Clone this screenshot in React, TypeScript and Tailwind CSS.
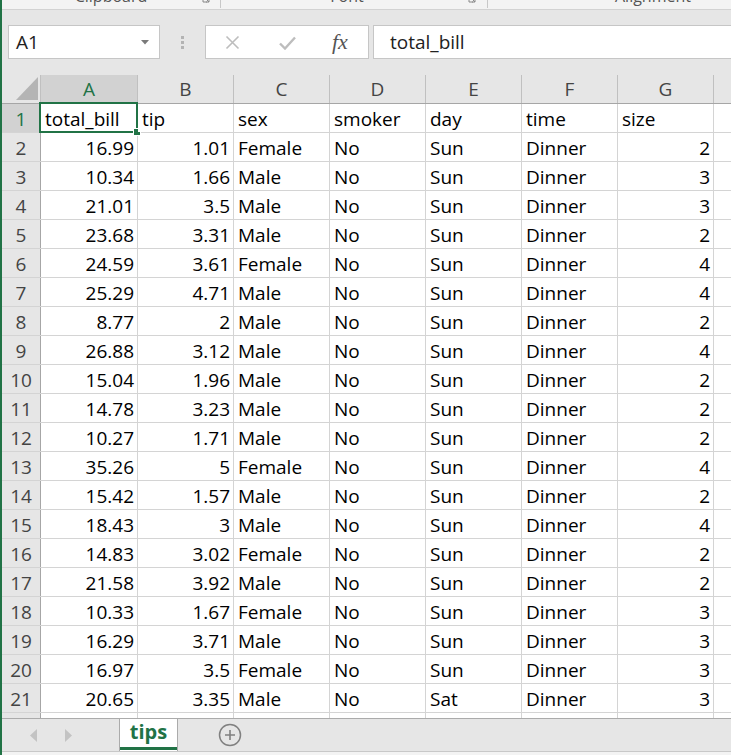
import React from "react";

const rows: (string | number)[][] = [
  [16.99, 1.01, "Female", "No", "Sun", "Dinner", 2],
  [10.34, 1.66, "Male", "No", "Sun", "Dinner", 3],
  [21.01, 3.5, "Male", "No", "Sun", "Dinner", 3],
  [23.68, 3.31, "Male", "No", "Sun", "Dinner", 2],
  [24.59, 3.61, "Female", "No", "Sun", "Dinner", 4],
  [25.29, 4.71, "Male", "No", "Sun", "Dinner", 4],
  [8.77, 2, "Male", "No", "Sun", "Dinner", 2],
  [26.88, 3.12, "Male", "No", "Sun", "Dinner", 4],
  [15.04, 1.96, "Male", "No", "Sun", "Dinner", 2],
  [14.78, 3.23, "Male", "No", "Sun", "Dinner", 2],
  [10.27, 1.71, "Male", "No", "Sun", "Dinner", 2],
  [35.26, 5, "Female", "No", "Sun", "Dinner", 4],
  [15.42, 1.57, "Male", "No", "Sun", "Dinner", 2],
  [18.43, 3, "Male", "No", "Sun", "Dinner", 4],
  [14.83, 3.02, "Female", "No", "Sun", "Dinner", 2],
  [21.58, 3.92, "Male", "No", "Sun", "Dinner", 2],
  [10.33, 1.67, "Female", "No", "Sun", "Dinner", 3],
  [16.29, 3.71, "Male", "No", "Sun", "Dinner", 3],
  [16.97, 3.5, "Female", "No", "Sun", "Dinner", 3],
  [20.65, 3.35, "Male", "No", "Sat", "Dinner", 3],
];

const headers = ["total_bill", "tip", "sex", "smoker", "day", "time", "size"];
const cols = ["A", "B", "C", "D", "E", "F", "G"];
const colW = ["w-[97px]", "w-[96px]", "w-[96px]", "w-[96px]", "w-[96px]", "w-[96px]", "w-[96px]"];

function Cell({ v, i }: { v: string | number; i: number }) {
  const num = typeof v === "number";
  return (
    <div
      className={`${colW[i]} shrink-0 h-full border-r border-[#d4d4d4] bg-white whitespace-nowrap overflow-hidden pt-[1px] ${
        num ? "text-right pr-[3px]" : "text-left pl-[4px]"
      }`}
    >
      {v}
    </div>
  );
}

function Launcher({ left }: { left: string }) {
  return (
    <div className={`absolute ${left} top-[-2px]`}>
      <svg width="10" height="6" viewBox="0 0 10 6">
        <path d="M1 0 V4 H5" stroke="#888" strokeWidth="1" fill="none" />
        <path d="M3 0 L7 4 M7 1 V4 H4" stroke="#888" strokeWidth="1" fill="none" />
      </svg>
    </div>
  );
}

export default function App() {
  return (
    <div className="w-[731px] h-[755px] overflow-hidden flex flex-col border-l-2 border-[#217346] bg-[#e6e6e6] text-[19px] text-black font-['Open_Sans',sans-serif]">
      {/* ribbon remnant */}
      <div className="h-[10px] shrink-0 bg-[#f3f3f3] border-b border-[#d2d2d2] relative overflow-hidden text-[#555] text-[16px]">
        <div className="absolute left-0 top-[-14px] w-[218px] text-center leading-[20px]">Clipboard</div>
        <Launcher left="left-[200px]" />
        <div className="absolute left-[218px] top-0 h-[8px] border-l border-[#c8c8c8]" />
        <div className="absolute left-[220px] top-[-14px] w-[250px] text-center leading-[20px]">Font</div>
        <Launcher left="left-[466px]" />
        <div className="absolute left-[485px] top-0 h-[8px] border-l border-[#c8c8c8]" />
        <div className="absolute left-[540px] top-[-14px] w-[222px] text-center leading-[20px]">Alignment</div>
      </div>

      {/* formula bar */}
      <div className="h-[65px] shrink-0 flex items-start pt-[15px] pl-[6px]">
        <div className="w-[152px] h-[34px] bg-white border border-[#c6c6c6] flex items-center pl-[7px] pr-[10px] text-[#222]">
          <span className="flex-1">A1</span>
          <svg width="8" height="5" viewBox="0 0 8 5">
            <path d="M0 0 H8 L4 4.5 Z" fill="#7a7a7a" />
          </svg>
        </div>
        <div className="w-[45px] h-[34px] flex flex-col items-center justify-center gap-[2px]">
          <div className="w-[3px] h-[3px] bg-[#b3b3b3]" />
          <div className="w-[3px] h-[3px] bg-[#b3b3b3]" />
          <div className="w-[3px] h-[3px] bg-[#b3b3b3]" />
        </div>
        <div className="w-[164px] h-[34px] bg-white border border-[#c6c6c6] flex items-center relative">
          <svg className="absolute left-[19px] top-[9px]" width="15" height="15" viewBox="0 0 15 15">
            <path d="M1.5 1.5 L13.5 13.5 M13.5 1.5 L1.5 13.5" stroke="#bdbdbd" strokeWidth="1.6" />
          </svg>
          <svg className="absolute left-[73px] top-[10px]" width="17" height="14" viewBox="0 0 17 14">
            <path d="M1 7.5 L6 12.5 L16 1.5" stroke="#bdbdbd" strokeWidth="2.4" fill="none" />
          </svg>
          <span className="absolute left-[126px] top-[2px] font-['Liberation_Serif',serif] italic text-[22px] text-[#555] leading-[28px]">
            fx
          </span>
        </div>
        <div className="ml-[4px] flex-1 h-[34px] bg-white border border-r-0 border-[#c6c6c6] flex items-center pl-[16px] text-[#222]">
          total_bill
        </div>
      </div>

      {/* column headers */}
      <div className="h-[29px] shrink-0 flex border-b border-[#a6a6a6] text-[#444] leading-[28px]">
        <div className="w-[39px] shrink-0 h-full border-r border-[#c0c0c0] relative">
          <svg className="absolute left-[14px] top-[2px]" width="22" height="23" viewBox="0 0 22 23">
            <path d="M22 0 V23 H0 Z" fill="#b4b4b4" />
          </svg>
        </div>
        {cols.map((c, i) => (
          <div
            key={c}
            className={`${colW[i]} shrink-0 h-full text-center border-r border-[#c0c0c0] ${
              i === 0 ? "bg-[#d2d2d2] text-[#217346]" : ""
            }`}
          >
            {c}
          </div>
        ))}
        <div className="flex-1" />
      </div>

      {/* grid rows */}
      <div className="flex flex-col">
        <div className="h-[29px] shrink-0 flex border-b border-[#d4d4d4] leading-[28px]">
          <div className="w-[39px] shrink-0 h-full text-center bg-[#d2d2d2] text-[#217346] border-r border-[#a6a6a6] pt-[1px]">1</div>
          {headers.map((h, i) => (
            <div key={h} className={`${colW[i]} shrink-0 h-full border-r border-[#d4d4d4] bg-white pl-[4px] pt-[1px] relative whitespace-nowrap`}>
              {h}
              {i === 0 && (
                <div className="absolute left-[-2px] top-[-2px] w-[99px] h-[31px] border-2 border-[#217346]">
                  <div className="absolute right-[-5px] bottom-[-5px] w-[8px] h-[8px] bg-[#217346] border border-white" />
                </div>
              )}
            </div>
          ))}
          <div className="flex-1 bg-white" />
        </div>
        {rows.map((r, ri) => (
          <div key={ri} className="h-[29px] shrink-0 flex border-b border-[#d4d4d4] leading-[28px] overflow-hidden">
            <div className="w-[39px] shrink-0 h-full text-center text-[#444] border-r border-[#a6a6a6] bg-[#e6e6e6] pt-[1px]">{ri + 2}</div>
            {r.map((v, i) => (
              <Cell key={i} v={v} i={i} />
            ))}
            <div className="flex-1 bg-white" />
          </div>
        ))}
        <div className="h-[5px] shrink-0 flex">
          <div className="w-[39px] shrink-0 h-full border-r border-[#a6a6a6] bg-[#e6e6e6]" />
          {cols.map((c, i) => (
            <div key={c} className={`${colW[i]} shrink-0 h-full border-r border-[#d4d4d4] bg-white`} />
          ))}
          <div className="flex-1 bg-white" />
        </div>
      </div>

      {/* sheet tabs */}
      <div className="h-[34px] shrink-0 flex items-stretch border-t border-[#ababab] border-b border-b-[#c8c8c8] bg-[#e6e6e6]">
        <div className="w-[117px] shrink-0 flex items-center">
          <svg className="ml-[28px]" width="8" height="13" viewBox="0 0 8 13">
            <path d="M7 0 V13 L0 6.5 Z" fill="#c3c3c3" />
          </svg>
          <svg className="ml-[27px]" width="8" height="13" viewBox="0 0 8 13">
            <path d="M0 0 V13 L7 6.5 Z" fill="#c3c3c3" />
          </svg>
        </div>
        <div className="w-[59px] shrink-0 bg-white border-l border-r border-[#ababab] flex flex-col">
          <div className="flex-1 flex items-center justify-center font-bold text-[20px] text-[#217346] leading-none pb-[2px]">tips</div>
          <div className="h-[3px] bg-[#217346] mb-[1px]" />
        </div>
        <div className="w-[90px] shrink-0 flex items-center pl-[40px]">
          <svg width="24" height="24" viewBox="0 0 24 24">
            <circle cx="12" cy="12" r="10.5" stroke="#808080" strokeWidth="1.5" fill="none" />
            <path d="M12 7 V17 M7 12 H17" stroke="#808080" strokeWidth="1.6" />
          </svg>
        </div>
        <div className="flex-1" />
      </div>
      <div className="flex-1 bg-[#f3f3f3]" />
    </div>
  );
}
